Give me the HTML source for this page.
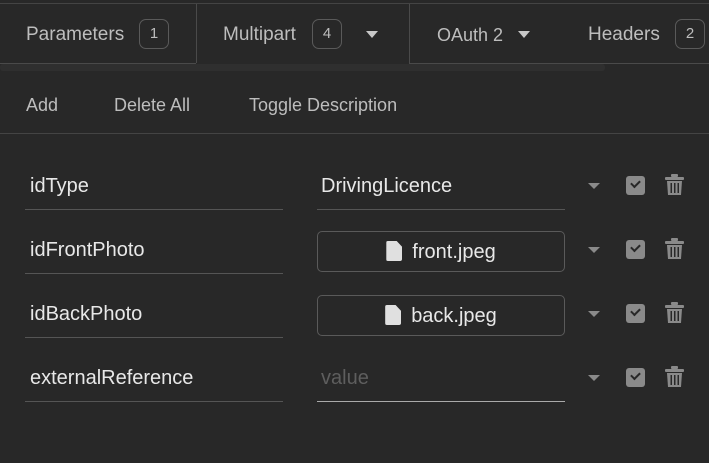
<!DOCTYPE html>
<html><head><style>
*{margin:0;padding:0;box-sizing:border-box}
body{width:709px;height:463px;background:#282828;font-family:"Liberation Sans",sans-serif;color:#ddd;position:relative;overflow:hidden}
.a{position:absolute}
.tab{font-size:19px;color:#bdbdbd;top:24px}
.badge{position:absolute;border:1px solid #5a5a5a;border-radius:7px;width:30px;height:30px;top:19px;font-size:15px;color:#bdbdbd;text-align:center;line-height:28px}
.tri{position:absolute;width:0;height:0;border-left:6px solid transparent;border-right:6px solid transparent;border-top:7px solid #c8c8c8}
.key{position:absolute;left:30px;font-size:20px;color:#e8e8e8}
.ul{position:absolute;height:1px;background:#555}
.box{position:absolute;left:317px;width:248px;height:41px;border:1px solid #5a5a5a;border-radius:5px;font-size:20px;color:#e8e8e8;text-align:center;line-height:41px}
.chk{position:absolute;left:626px;width:19px;height:19px;background:#8a8a8a;border-radius:3px}
.chk:after{content:"";position:absolute;left:5px;top:4px;width:7px;height:4px;border-left:2px solid #282828;border-bottom:2px solid #282828;transform:rotate(-45deg)}
.dd{position:absolute;left:588px;width:0;height:0;border-left:6px solid transparent;border-right:6px solid transparent;border-top:6px solid #8a8a8a}
.file{display:inline-block;width:16px;height:20px;background:#e0e0e0;border-radius:2px;vertical-align:-3px;margin-right:10px;clip-path:polygon(0 0,65% 0,100% 30%,100% 100%,0 100%)}
</style></head><body>
<div class="a" style="left:0;top:3px;width:709px;height:1px;background:#444"></div>
<div class="a" style="left:0;top:63px;width:196px;height:1px;background:#4a4a4a"></div>
<div class="a" style="left:409px;top:63px;width:300px;height:1px;background:#4a4a4a"></div>
<div class="a" style="left:196px;top:4px;width:1px;height:59px;background:#4a4a4a"></div>
<div class="a" style="left:409px;top:4px;width:1px;height:59px;background:#4a4a4a"></div>
<div class="a" style="left:0;top:64px;width:605px;height:7px;background:#2f2f2f;border-radius:3px"></div>
<div class="a tab" style="left:26px">Parameters</div><div class="badge" style="left:139px">1</div>
<div class="a tab" style="left:223px">Multipart</div><div class="badge" style="left:312px">4</div><div class="tri" style="left:366px;top:31px"></div>
<div class="a tab" style="left:437px;font-size:18px;top:25px">OAuth 2</div><div class="tri" style="left:518px;top:31px"></div>
<div class="a tab" style="left:588px">Headers</div><div class="badge" style="left:675px">2</div>
<div class="a" style="left:26px;top:95px;font-size:18px;color:#bdbdbd">Add</div>
<div class="a" style="left:114px;top:95px;font-size:18px;color:#bdbdbd">Delete All</div>
<div class="a" style="left:249px;top:95px;font-size:18px;color:#bdbdbd">Toggle Description</div>
<div class="a" style="left:0;top:133px;width:709px;height:1px;background:#444"></div>

<div class="key" style="top:175px">idType</div><div class="ul" style="left:25px;width:258px;top:209px"></div>
<div class="a" style="left:321px;top:175px;font-size:20px;color:#e8e8e8">DrivingLicence</div><div class="ul" style="left:317px;width:248px;top:209px"></div>
<div class="key" style="top:239px">idFrontPhoto</div><div class="ul" style="left:25px;width:258px;top:273px"></div>
<div class="box" style="top:231px"><span class="file"></span>front.jpeg</div>
<div class="key" style="top:303px">idBackPhoto</div><div class="ul" style="left:25px;width:258px;top:337px"></div>
<div class="box" style="top:295px"><span class="file"></span>back.jpeg</div>
<div class="key" style="top:367px">externalReference</div><div class="ul" style="left:25px;width:258px;top:401px"></div>
<div class="a" style="left:321px;top:367px;font-size:20px;color:#5e5e5e">value</div><div class="ul" style="left:317px;width:248px;top:401px;background:#aaa"></div>

<div class="dd" style="top:183px"></div><div class="chk" style="top:176px"></div>
<div class="dd" style="top:247px"></div><div class="chk" style="top:240px"></div>
<div class="dd" style="top:311px"></div><div class="chk" style="top:304px"></div>
<div class="dd" style="top:375px"></div><div class="chk" style="top:368px"></div>
<svg class="a" style="left:664px;top:174px" width="22" height="220" fill="#8a8a8a">
<g id="t"><rect x="1" y="3" width="19" height="3" rx="1"/><rect x="7" y="0" width="7" height="3" rx="1"/><path d="M3 7h15l-1 14H4z"/><rect x="6.5" y="9" width="1.5" height="10" fill="#282828"/><rect x="10" y="9" width="1.5" height="10" fill="#282828"/><rect x="13.5" y="9" width="1.5" height="10" fill="#282828"/></g>
<use href="#t" y="64"/><use href="#t" y="128"/><use href="#t" y="192"/>
</svg>
</body></html>
